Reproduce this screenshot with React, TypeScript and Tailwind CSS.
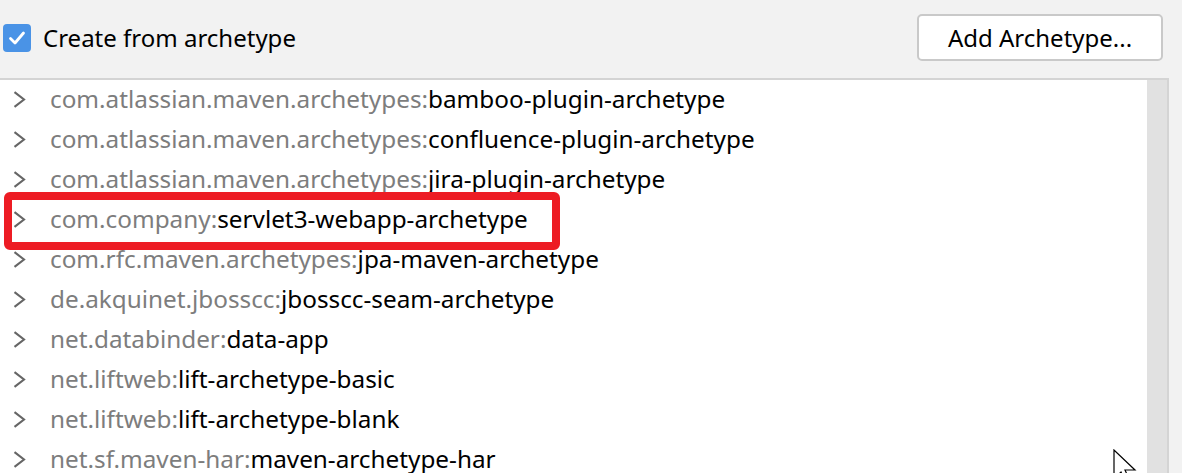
import React from "react";

const rows: [string, string][] = [
  ["com.atlassian.maven.archetypes:", "bamboo-plugin-archetype"],
  ["com.atlassian.maven.archetypes:", "confluence-plugin-archetype"],
  ["com.atlassian.maven.archetypes:", "jira-plugin-archetype"],
  ["com.company:", "servlet3-webapp-archetype"],
  ["com.rfc.maven.archetypes:", "jpa-maven-archetype"],
  ["de.akquinet.jbosscc:", "jbosscc-seam-archetype"],
  ["net.databinder:", "data-app"],
  ["net.liftweb:", "lift-archetype-basic"],
  ["net.liftweb:", "lift-archetype-blank"],
  ["net.sf.maven-har:", "maven-archetype-har"],
];

function Chevron() {
  return (
    <svg width="13" height="17" viewBox="0 0 13 17" className="shrink-0">
      <path d="M1.5 1.2 L11 8.5 L1.5 15.8" fill="none" stroke="#666666" strokeWidth="2.1" />
    </svg>
  );
}

export default function App() {
  return (
    <div
      className="relative w-[1182px] h-[473px] overflow-hidden bg-[#f2f2f2] flex flex-col"
      style={{ fontFamily: '"Noto Sans", "Open Sans", sans-serif' }}
    >
      <div className="h-[78px] shrink-0 flex items-center justify-between pl-[3px] pr-[19px]">
        <div className="flex items-center gap-[12px] pb-[2px]">
          <div className="w-[28px] h-[28px] rounded-[4px] bg-[#4a93e6] flex items-center justify-center">
            <svg width="20" height="20" viewBox="0 0 20 20">
              <path d="M3.5 10.5 L8 15 L16.5 5" fill="none" stroke="#ffffff" strokeWidth="2.8" strokeLinecap="round" strokeLinejoin="round" />
            </svg>
          </div>
          <span className="text-[24px] leading-none text-black">Create from archetype</span>
        </div>
        <div className="w-[246px] h-[47px] mb-[3px] rounded-[5px] border-2 border-[#c9c9c9] bg-white flex items-center justify-center">
          <span className="text-[24px] leading-none text-black">Add Archetype...</span>
        </div>
      </div>
      <div className="flex flex-1 min-h-0 border-t-2 border-[#d4d4d4] w-[1169px]">
        <div className="flex-1 bg-white flex flex-col">
          {rows.map(([g, a], i) => (
            <div key={i} className="h-[40px] shrink-0 flex items-center pl-[13px] gap-[24px] pb-[2px]">
              <Chevron />
              <span className="text-[24.3px] leading-none whitespace-nowrap">
                <span className="text-[#7d7d7d]">{g}</span>
                <span className="text-black">{a}</span>
              </span>
            </div>
          ))}
        </div>
        <div className="w-[20px] bg-[#e1e1e1]" />
        <div className="w-[2px] bg-[#d4d4d4]" />
      </div>
      <div className="absolute left-[4px] top-[192px] w-[556px] h-[58px] border-[8px] border-[#ed1c24] rounded-[6px]" />
      <svg className="absolute left-[1113px] top-[449px]" width="30" height="40" viewBox="0 0 30 40">
        <path d="M1 1 L1 30 L8 23 L13 34 L17 32 L12 21 L22 21 Z" fill="#ffffff" stroke="#000000" strokeWidth="1.2" />
      </svg>
    </div>
  );
}
